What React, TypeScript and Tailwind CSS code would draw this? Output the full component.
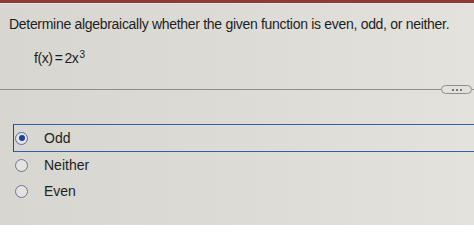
import React from "react";

const options = ["Odd", "Neither", "Even"];

function Radio({ checked }: { checked: boolean }) {
  return (
    <span
      className={`flex h-[13px] w-[13px] shrink-0 items-center justify-center rounded-full border-[1.5px] bg-[#e4e3e0] ${
        checked ? "border-[#5b6bb0]" : "border-[#6f7499]"
      }`}
    >
      {checked && <span className="h-[6px] w-[6px] rounded-full bg-[#1f3f9a]" />}
    </span>
  );
}

export default function App() {
  const selected = "Odd";

  return (
    <div
      className="h-[225px] w-[474px] overflow-hidden bg-gradient-to-r from-[#d7d6d0] via-[#dcdbd6] to-[#e3e2dd] text-[#1e1e1e]"
      style={{ fontFamily: '"Liberation Sans", Arial, sans-serif' }}
    >
      <div className="h-[3px] bg-[#8c3a3a]" />
      <div className="h-[1px] bg-[#e6e4e0]" />

      <div className="pl-[9px] pt-[11px] text-[14px] leading-[18px] tracking-[-0.3px]">
        Determine algebraically whether the given function is even, odd, or neither.
      </div>

      <div className="pl-[34px] pt-[17px] text-[14px] leading-[16px] tracking-[-0.4px]">
        f(x)<span className="mx-[2px]">=</span>2x<sup className="relative top-[-0.5em] ml-[1px] text-[10px]">3</sup>
      </div>

      <div className="mt-[19px] flex items-center">
        <div className="h-[1px] flex-1 bg-[#8e8e8c]" />
        <div className="flex h-[9px] w-[31px] items-center justify-center gap-[2px] rounded-full border border-[#8e8e8c] bg-[#e2e1dc]">
          <span className="h-[2px] w-[2px] rounded-full bg-[#555]" />
          <span className="h-[2px] w-[2px] rounded-full bg-[#555]" />
          <span className="h-[2px] w-[2px] rounded-full bg-[#555]" />
        </div>
        <div className="h-[1px] w-[2px] bg-[#8e8e8c]" />
      </div>

      <div className="mt-[30px] flex flex-col">
        {options.map((opt) => {
          const checked = opt === selected;
          return (
            <div
              key={opt}
              className={`ml-[13px] flex items-center ${
                checked
                  ? "-mr-[4px] h-[28px] border-y-[1.5px] border-l-[1.5px] border-[#35609c] border-l-[#2b4a70]"
                  : "h-[26px] border-l-[1.5px] border-transparent"
              }`}
            >
              <span className="ml-[1px]">
                <Radio checked={checked} />
              </span>
              <span className="ml-[16px] text-[14px] leading-[18px]">{opt}</span>
            </div>
          );
        })}
      </div>
    </div>
  );
}
